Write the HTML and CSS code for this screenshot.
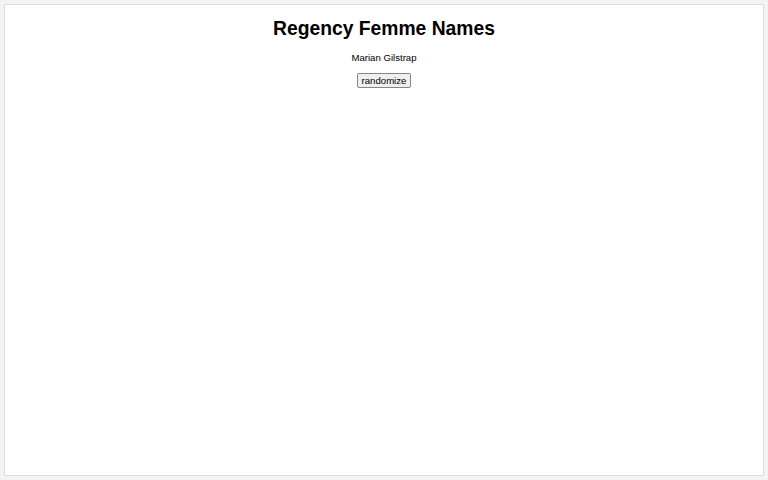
FILE: index.html
```html
<!DOCTYPE html>
<html lang="en">

<head>
    <meta charset="UTF-8">
    <meta name="viewport" content="width=device-width, initial-scale=1.0">
    <title>Regency Femme Names</title>
    <link rel="stylesheet" href="styles.css">
</head>

<body>
    <div class="card">
        <h1>Regency Femme Names</h1>
        <p id="name">Marian Gilstrap</p>
        <button id="randomize">randomize</button>
    </div>
</body>

</html>
```

FILE: styles.css
```css
/* CSS for styling */
body {
    font-family: "Liberation Sans", Arial, sans-serif;
    background-color: #f3f3f3;
    margin: 0;
    padding: 4px;
}

.card {
    background-color: #fff;
    border: 1px solid #dcdcdc;
    text-align: center;
    box-sizing: border-box;
    height: 472px;
}

h1 {
    font-size: 19.3px;
    margin: 0;
    padding-top: 13px;
}

#name {
    font-size: 9.6px;
    margin: 12px 0 7px;
}

#randomize {
    font-family: "Liberation Sans", Arial, sans-serif;
    font-size: 9.6px;
    padding: 1px 4px;
    background-color: #efefef;
    border: 1px solid #858585;
    border-radius: 2px;
}
```
